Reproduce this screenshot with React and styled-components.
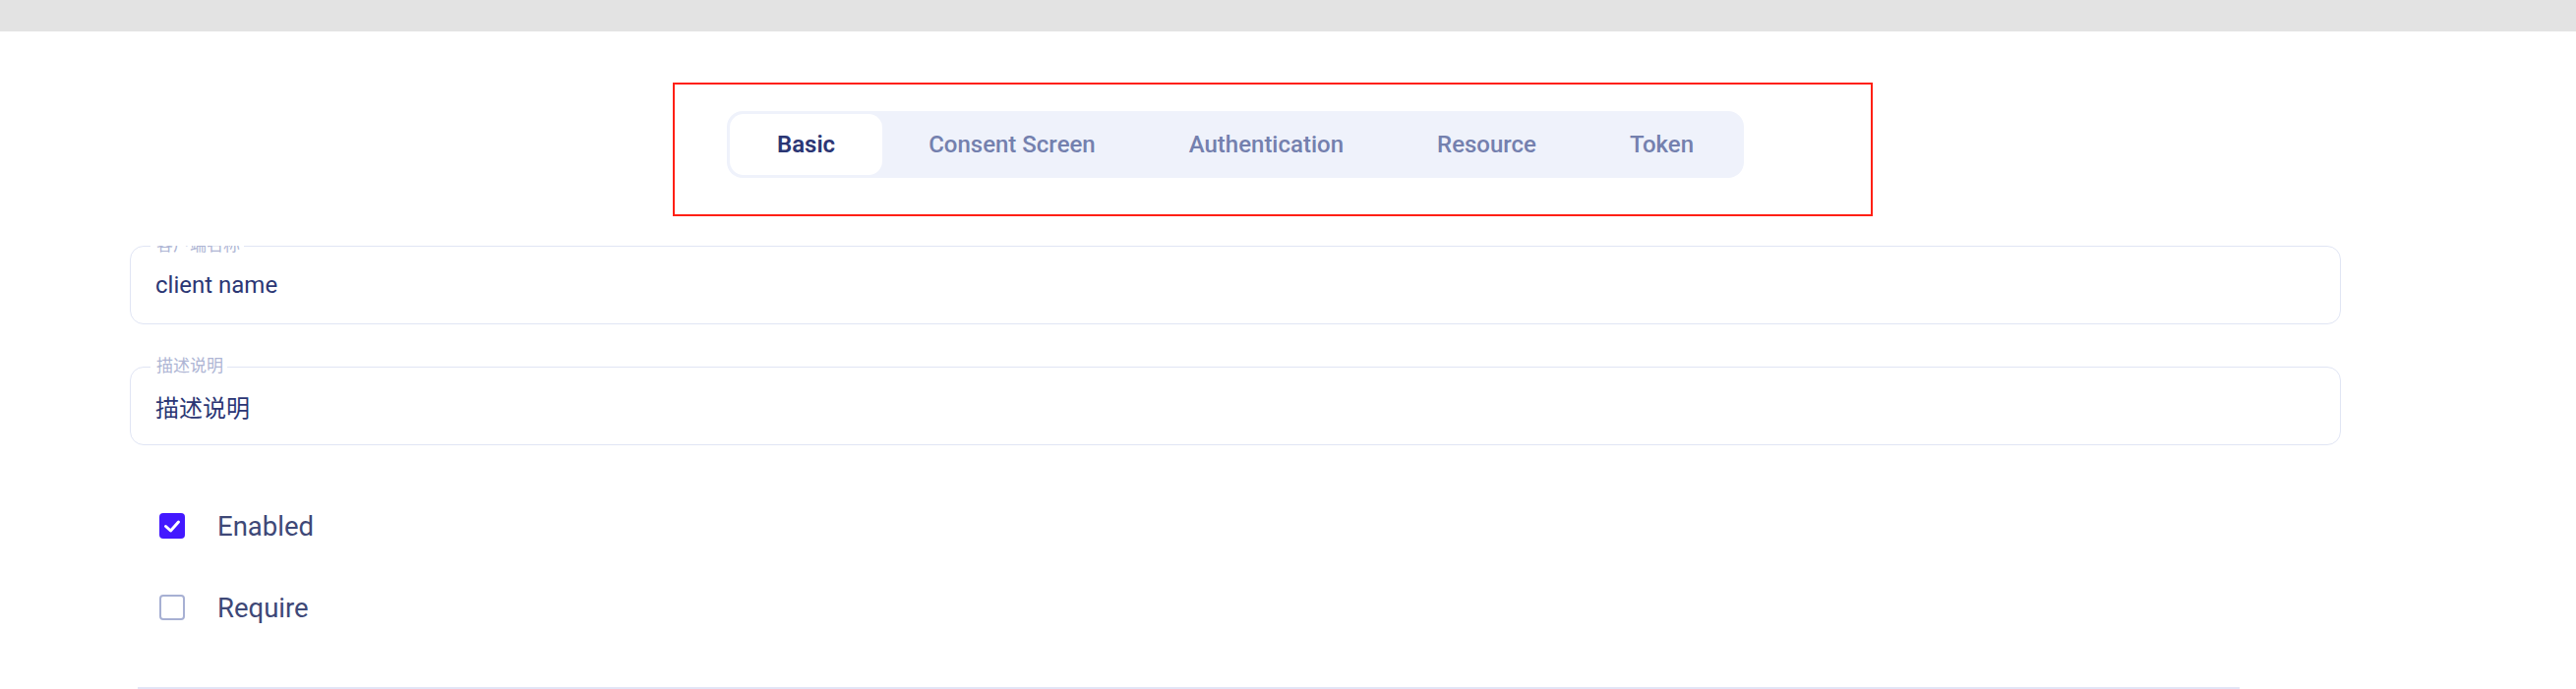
import styled, { createGlobalStyle } from 'styled-components';

const GlobalStyle = createGlobalStyle`
  html, body {
    margin: 0;
    padding: 0;
    background: #fff;
    font-family: Roboto, "Noto Sans CJK SC", sans-serif;
  }
  * { box-sizing: border-box; }
`;

const TopBar = styled.div`
  height: 32px;
  background-color: #e3e3e3;
`;

const Column = styled.div`
  width: 2248px;
  margin-left: 132px;
  display: flex;
  flex-direction: column;
`;

const TabsRow = styled.div`
  margin-top: 81px;
  display: flex;
  justify-content: center;
`;

// red annotation frame drawn over the tab strip
const Highlight = styled.div`
  position: relative;
  &::before {
    content: '';
    position: absolute;
    top: -29px;
    left: -55px;
    right: -131px;
    bottom: -39px;
    border: 2px solid #ff2014;
    pointer-events: none;
  }
`;

const TabList = styled.div`
  display: flex;
  padding: 3px;
  background-color: #eff2fb;
  border-radius: 16px;
`;

const Tab = styled.button`
  height: 62px;
  padding: 0 47.5px;
  border: none;
  border-radius: 14px;
  font-family: Roboto, sans-serif;
  font-size: 24px;
  font-weight: ${({ $active }) => ($active ? 600 : 500)};
  color: ${({ $active }) => ($active ? '#2b3674' : '#7480ae')};
  background-color: ${({ $active }) => ($active ? '#fff' : 'transparent')};
  cursor: pointer;
`;

const FormArea = styled.div`
  margin-top: 69px;
  overflow: hidden;
  display: flex;
  flex-direction: column;
`;

const Field = styled.div`
  position: relative;
  height: 80px;
  border: 1.5px solid #e0e5f4;
  border-radius: 14px;
  margin-bottom: ${({ $last }) => ($last ? '0' : '43px')};
  display: flex;
  align-items: center;
`;

const FieldLabel = styled.span`
  position: absolute;
  top: -10px;
  left: 20px;
  padding: 0 4px 0 6px;
  background: #fff;
  font-size: 17px;
  line-height: 17px;
  color: #aeb5d4;
  font-family: Roboto, "Noto Sans CJK SC", sans-serif;
`;

const Input = styled.input`
  width: 100%;
  height: 100%;
  padding: 0 25px;
  border: none;
  outline: none;
  background: transparent;
  font-family: Roboto, "Noto Sans CJK SC", sans-serif;
  font-size: 24px;
  color: #2b3674;
`;

const CheckList = styled.div`
  margin-top: 52px;
  padding-left: 30px;
  display: flex;
  flex-direction: column;
  gap: 23px;
`;

const CheckRow = styled.label`
  height: 60px;
  display: flex;
  align-items: center;
  gap: 33px;
  font-size: 27.5px;
  color: #3e4877;
  cursor: pointer;
`;

const Box = styled.span`
  width: 26px;
  height: 26px;
  border-radius: 4px;
  display: flex;
  align-items: center;
  justify-content: center;
  background-color: ${({ $checked }) => ($checked ? '#4318ff' : '#fff')};
  border: ${({ $checked }) => ($checked ? 'none' : '2.5px solid #a7b0d3')};
`;

const Divider = styled.div`
  margin-top: 51px;
  margin-left: 8px;
  width: 2137px;
  height: 2px;
  background-color: #e2e5f6;
`;

const tabs = ['Basic', 'Consent Screen', 'Authentication', 'Resource', 'Token'];

function Checkbox({ checked, label }) {
  return (
    <CheckRow>
      <Box $checked={checked}>
        {checked && (
          <svg width="20" height="20" viewBox="0 0 20 20" fill="none">
            <path d="M3.5 10.5l5 4.5 8-9" stroke="#fff" strokeWidth="3" strokeLinecap="round" strokeLinejoin="round" />
          </svg>
        )}
      </Box>
      {label}
    </CheckRow>
  );
}

export default function App() {
  return (
    <>
      <GlobalStyle />
      <TopBar />
      <Column>
        <TabsRow>
          <Highlight>
            <TabList>
              {tabs.map((t, i) => (
                <Tab key={t} $active={i === 0}>
                  {t}
                </Tab>
              ))}
            </TabList>
          </Highlight>
        </TabsRow>
        <FormArea>
          <Field>
            <FieldLabel>客户端名称</FieldLabel>
            <Input defaultValue="client name" />
          </Field>
          <Field $last>
            <FieldLabel>描述说明</FieldLabel>
            <Input defaultValue="描述说明" />
          </Field>
          <CheckList>
            <Checkbox checked label="Enabled" />
            <Checkbox label="Require" />
          </CheckList>
          <Divider />
        </FormArea>
      </Column>
    </>
  );
}
